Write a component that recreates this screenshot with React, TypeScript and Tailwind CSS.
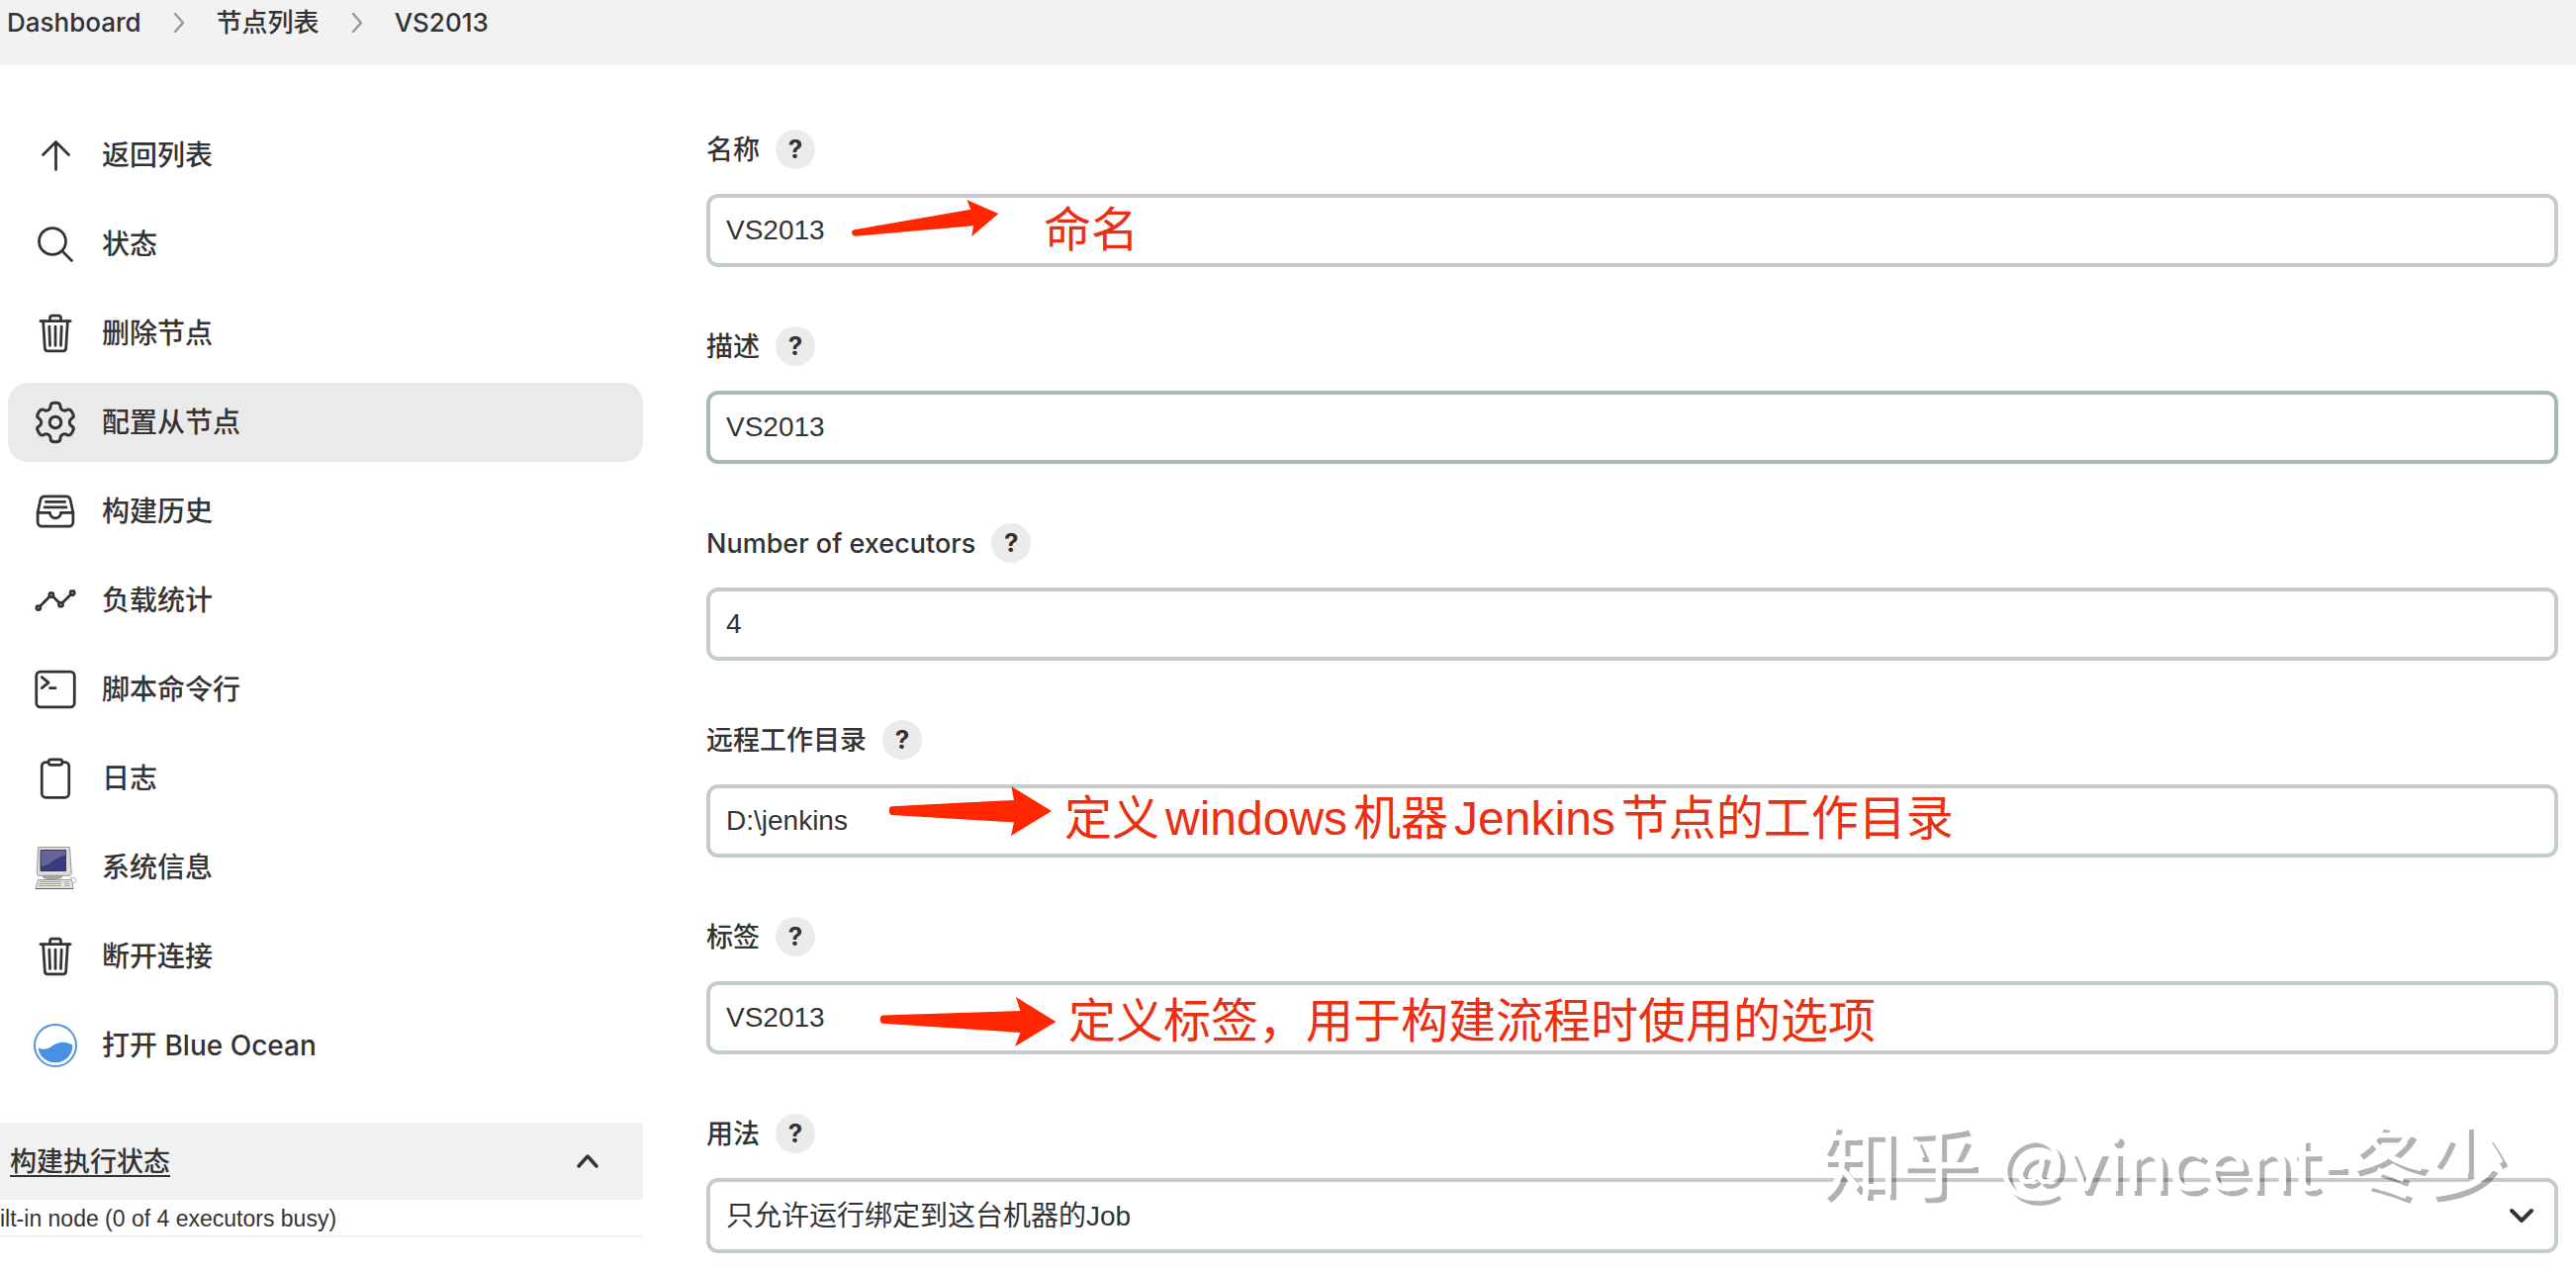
import React from 'react';
import {
  IoAnalyticsOutline,
  IoClipboardOutline,
  IoFileTrayFullOutline,
  IoSearchOutline,
  IoTerminalOutline,
  IoTrashOutline,
} from 'react-icons/io5';

type IconProps = { className?: string };

const UpIcon = ({ className }: IconProps) => (
  <svg viewBox="0 0 44 44" className={className} fill="none" stroke="currentColor" strokeWidth="2.8" aria-hidden="true">
    <path d="M22.500 36.500V9M9.500 21.500 22.500 8.500l13 13" strokeLinecap="round" strokeLinejoin="round" />
  </svg>
);

// Six teeth: two tip points and two base points each, joined by quadratic curves
const gearPoints = [0, 60, 120, 180, 240, 300].flatMap((angle) =>
  [
    [-21, 14.5],
    [-13, 20.2],
    [13, 20.2],
    [21, 14.5],
  ].map(([offset, radius]) => {
    const rad = ((angle + offset - 90) * Math.PI) / 180;
    return [22 + radius * Math.cos(rad), 22 + radius * Math.sin(rad)];
  })
);

const gearPath =
  gearPoints
    .map(([x, y], i) => {
      const [nx, ny] = gearPoints[(i + 1) % gearPoints.length];
      const [px, py] = gearPoints[(i + gearPoints.length - 1) % gearPoints.length];
      const start = `${x + (px - x) * 0.4} ${y + (py - y) * 0.4}`;
      const end = `${x + (nx - x) * 0.4} ${y + (ny - y) * 0.4}`;
      return `${i === 0 ? 'M' : 'L'}${start}Q${x} ${y} ${end}`;
    })
    .join('') + 'Z';

const GearIcon = ({ className }: IconProps) => (
  <svg viewBox="0 0 44 44" className={className} fill="none" stroke="currentColor" strokeWidth="3" aria-hidden="true">
    <path d={gearPath} strokeLinejoin="round" />
    <circle cx="22" cy="22" r="5.8" />
  </svg>
);

const ComputerIcon = ({ className }: IconProps) => (
  <svg viewBox="0 0 44 44" className={className} aria-hidden="true">
    <path d="M36 33c5-2 8 1 7 3s-3 2-5 2" fill="none" stroke="#c9c9c5" strokeWidth="1.2" />
    <ellipse cx="19" cy="31" rx="10" ry="3" fill="#a9aaa6" stroke="#7c7d79" strokeWidth="0.6" />
    <path d="M4.500 1.500h32l1.800 27-1.800 1.800h-32L3.400 28.500z" fill="#dcdcd8" stroke="#83847f" strokeWidth="0.8" />
    <path d="M7 4.500h25.500v21H7z" fill="#3b3a7e" stroke="#20204f" strokeWidth="0.8" />
    <path d="M7.500 5h24.600v4.500C22 11 18 20 7.500 21z" fill="#77779f" opacity="0.7" />
    <path d="M4.500 34.500h34L40 43.500H1.800z" fill="#e4e4e0" stroke="#83847f" strokeWidth="0.8" />
    <path d="M6 36.500h22M5.500 38.500h22.500M5 40.500h23M31 36.500h5M31 38.500h5.500M31 40.500h6" stroke="#a5a6a1" strokeWidth="1" />
    <path d="M2 43.500h38" stroke="#5e5f5b" strokeWidth="1" />
  </svg>
);

const BlueOceanIcon = ({ className }: IconProps) => (
  <svg viewBox="0 0 44 44" className={className} aria-hidden="true">
    <circle cx="22" cy="22" r="21" fill="#fff" stroke="#4f94dd" strokeWidth="2" />
    <path d="M4.600 24.500c5.400 2 9 1.500 13.400-1.500 5.500-4 13-6.500 21.300-1.500.5 10-7.500 17.800-17.300 17.800-9.200 0-16.400-6.300-17.400-14.800z" fill="#4a90e2" />
  </svg>
);

const SIDE_ITEMS = [
  { label: '返回列表', icon: UpIcon },
  { label: '状态', icon: IoSearchOutline },
  { label: '删除节点', icon: IoTrashOutline },
  { label: '配置从节点', icon: GearIcon, active: true },
  { label: '构建历史', icon: IoFileTrayFullOutline },
  { label: '负载统计', icon: IoAnalyticsOutline },
  { label: '脚本命令行', icon: IoTerminalOutline },
  { label: '日志', icon: IoClipboardOutline },
  { label: '系统信息', icon: ComputerIcon },
  { label: '断开连接', icon: IoTrashOutline },
  { label: '打开 Blue Ocean', icon: BlueOceanIcon },
];

const BreadcrumbChevron = () => (
  <svg viewBox="0 0 12 20" className="w-3 h-5" fill="none" stroke="#999" strokeWidth="2.5" aria-hidden="true">
    <path d="M2 1l8 9-8 9" strokeLinecap="round" strokeLinejoin="round" />
  </svg>
);

const Breadcrumbs = () => (
  <nav className="bg-[#f2f2f2] pl-[7px] pt-1 pb-6 flex items-center gap-8 text-[26px] leading-[38px] font-medium">
    <a href="#dashboard">Dashboard</a>
    <BreadcrumbChevron />
    <a href="#nodes">节点列表</a>
    <BreadcrumbChevron />
    <a href="#vs2013">VS2013</a>
  </nav>
);

const Sidebar = () => (
  <aside className="w-[650px] shrink-0 pt-[51px]">
    <nav className="pl-2 flex flex-col gap-2.5">
      {SIDE_ITEMS.map((item) => {
        const Icon = item.icon;
        return (
          <a
            key={item.label}
            href="#"
            className={`h-20 pl-[26px] rounded-[20px] flex items-center gap-[25px] text-[28px] font-medium ${
              item.active ? 'bg-[#eaeaea]' : ''
            }`}
          >
            <Icon className="w-11 h-11 shrink-0" />
            <span>{item.label}</span>
          </a>
        );
      })}
    </nav>

    <section className="mt-[38px]">
      <div className="h-[78px] bg-[#f1f1f1] pl-2.5 pr-11 flex items-center justify-between">
        <a href="#executors" className="pt-0.5 text-[27px] font-medium underline decoration-2 underline-offset-4">
          构建执行状态
        </a>
        <button type="button" aria-label="收起">
          <svg viewBox="0 0 24 16" className="w-6 h-4" fill="none" stroke="currentColor" strokeWidth="3.5" aria-hidden="true">
            <path d="M3 13l9-10 9 10" strokeLinecap="round" strokeLinejoin="round" />
          </svg>
        </button>
      </div>
      <p className="h-[38px] border-b-2 border-[#f1f1f1] text-[23px] leading-[38px] font-['Liberation_Sans',sans-serif]">
        ilt-in node (0 of 4 executors busy)
      </p>
    </section>
  </aside>
);

type FieldProps = {
  id: string;
  label: string;
  children: React.ReactNode;
};

const Field = ({ id, label, children }: FieldProps) => (
  <div>
    <div className="h-10 flex items-center gap-4">
      <label htmlFor={id} className="pt-0.5 text-[27px] font-medium">
        {label}
      </label>
      <button
        type="button"
        aria-label={`帮助: ${label}`}
        className="w-10 h-10 rounded-full bg-[#ebebeb] text-[26px] leading-10 font-bold"
      >
        ?
      </button>
    </div>
    <div className="relative mt-[25px] font-['Liberation_Sans','Noto_Sans_CJK_SC',sans-serif]">{children}</div>
  </div>
);

const inputClass = 'block w-full h-[74px] px-4 rounded-xl border-4 bg-white text-[28px] outline-none';

const noteClass = 'absolute text-5xl leading-[70px] text-[#ea2f12] whitespace-nowrap pointer-events-none';

const arrowClass = 'absolute pointer-events-none fill-[#ff2600]';

const App = () => {
  return (
    <div className="min-h-screen overflow-hidden bg-white text-[#333] font-['Inter','Noto_Sans_CJK_SC',sans-serif]">
      <Breadcrumbs />
      <div className="flex">
        <Sidebar />

        <main className="flex-1 min-w-0 pl-16 pr-[18px] pt-[65px]">
          <form className="flex flex-col gap-[60px]">
            <Field id="name" label="名称">
              <input id="name" type="text" defaultValue="VS2013" className={`${inputClass} border-[#c3ccd1]`} />
              <svg viewBox="0 0 150 40" className={`${arrowClass} left-[146px] top-1 w-[150px] h-10`} aria-hidden="true">
                <path d="M3.500 32.300 121.300 11.700 117.300 2 149.300 16 122.300 39 124 28.300 5 38.700C0 38.500 0 33 3.500 32.300z" />
              </svg>
              <span className={`${noteClass} left-[341px] top-0.5`}>命名</span>
            </Field>

            <Field id="description" label="描述">
              <input id="description" type="text" defaultValue="VS2013" className={`${inputClass} border-[#a9b7bb]`} />
            </Field>

            <Field id="executors" label="Number of executors">
              <input id="executors" type="text" defaultValue="4" className={`${inputClass} border-[#c3ccd1]`} />
            </Field>

            <Field id="remote-root" label="远程工作目录">
              <input id="remote-root" type="text" defaultValue="D:\jenkins" className={`${inputClass} border-[#c3ccd1]`} />
              <svg viewBox="0 0 166 52" className={`${arrowClass} left-[184px] top-px w-[166px] h-[52px]`} aria-hidden="true">
                <path d="M3 21.300 127 15 124.300 1 165 26 124 51 127 37.300 3 30C0 29 0 22 3 21.300z" />
              </svg>
              <span className={`${noteClass} left-[362px] top-0`}>
                定义<span className="mx-1.5">windows</span>机器<span className="mx-1.5">Jenkins</span>节点的工作目录
              </span>
            </Field>

            <Field id="labels" label="标签">
              <input id="labels" type="text" defaultValue="VS2013" className={`${inputClass} border-[#c3ccd1]`} />
              <svg viewBox="0 0 179 52" className={`${arrowClass} left-[175px] top-[15px] w-[179px] h-[52px]`} aria-hidden="true">
                <path d="M3 19.500 142.400 15 138 1 178.400 26 137 51 142.400 37 3 27.700C0 27 0 20 3 19.500z" />
              </svg>
              <span className={`${noteClass} left-[366px] top-1.5`}>定义标签，用于构建流程时使用的选项</span>
            </Field>

            <Field id="usage" label="用法">
              <select
                id="usage"
                className="block w-full h-[76px] px-4 pt-0.5 rounded-xl border-4 border-[#c3ccd1] bg-white text-[28px] appearance-none outline-none"
              >
                <option>只允许运行绑定到这台机器的Job</option>
              </select>
              <svg
                viewBox="0 0 26 16"
                className="absolute right-6 inset-y-0 my-auto w-[26px] h-4 pointer-events-none"
                fill="none"
                stroke="currentColor"
                strokeWidth="4"
                aria-hidden="true"
              >
                <path d="M3 3l10 10L23 3" strokeLinecap="round" strokeLinejoin="round" />
              </svg>
              <span className="absolute right-[52px] -top-[66px] text-[80px] leading-[96px] font-['Lato','Noto_Sans_CJK_SC',sans-serif] text-white [text-shadow:5px_5px_0_rgba(0,0,0,0.3)] whitespace-nowrap pointer-events-none">
                知乎 @vincent-冬少
              </span>
            </Field>
          </form>
        </main>
      </div>
    </div>
  );
};

export default App;
